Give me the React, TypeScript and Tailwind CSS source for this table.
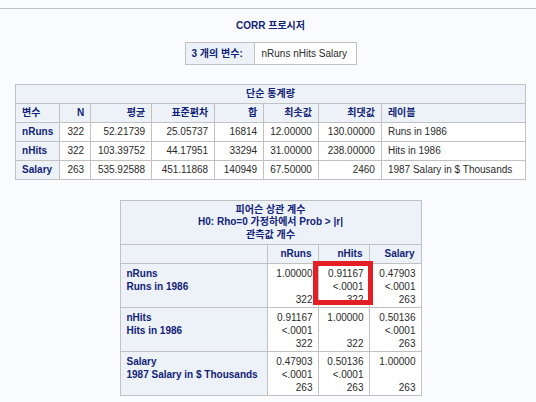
const hd = 'border border-[#c1c1c1] bg-[#edf2f9] font-bold text-[#112277]'
const dt = 'border border-[#c1c1c1] bg-white text-[#2a2a2a]'

const stats = [
  ['nRuns', '322', '52.21739', '25.05737', '16814', '12.00000', '130.00000', 'Runs in 1986'],
  ['nHits', '322', '103.39752', '44.17951', '33294', '31.00000', '238.00000', 'Hits in 1986'],
  ['Salary', '263', '535.92588', '451.11868', '140949', '67.50000', '2460', '1987 Salary in $ Thousands'],
]

const corr = [
  { name: 'nRuns', label: 'Runs in 1986', cells: [['1.00000', '', '322'], ['0.91167', '<.0001', '322'], ['0.47903', '<.0001', '263']] },
  { name: 'nHits', label: 'Hits in 1986', cells: [['0.91167', '<.0001', '322'], ['1.00000', '', '322'], ['0.50136', '<.0001', '263']] },
  { name: 'Salary', label: '1987 Salary in $ Thousands', cells: [['0.47903', '<.0001', '263'], ['0.50136', '<.0001', '263'], ['1.00000', '', '263']] },
]

const App = () => {
  return (
    <div className="min-h-[402px] w-full overflow-hidden bg-[#fafbfe] pt-2 font-['Liberation_Sans','Noto_Sans_CJK_KR',sans-serif] text-[10px] leading-[12px]">
      <div className="flex flex-col items-center border-t border-[#c1c1c1] pl-[5px]">

        <div className="mt-[10px] h-[13px] leading-[13px] font-bold text-[#112277]">CORR 프로시저</div>

        <table className="mt-[10px] border-collapse">
          <tbody>
            <tr className="h-[22px]">
              <td className={`${hd} w-[69px] px-[6px]`}>3 개의 변수:</td>
              <td className={`${dt} w-[102px] px-[7px]`}>nRuns nHits Salary</td>
            </tr>
          </tbody>
        </table>

        <table className="mt-[19px] table-fixed border-collapse">
          <colgroup>
            <col className="w-[44px]" />
            <col className="w-[31px]" />
            <col className="w-[61px]" />
            <col className="w-[63px]" />
            <col className="w-[49px]" />
            <col className="w-[54px]" />
            <col className="w-[63px]" />
            <col className="w-[144px]" />
          </colgroup>
          <tbody>
            <tr className="h-[19px]">
              <td colSpan={8} className={`${hd} text-center`}>단순 통계량</td>
            </tr>
            <tr className="h-[19px]">
              {['변수', 'N', '평균', '표준편차', '합', '최솟값', '최댓값', '레이블'].map((h, i) => (
                <td key={h} className={`${hd} px-[6px] ${i === 0 || i === 7 ? 'text-left' : 'text-right'}`}>{h}</td>
              ))}
            </tr>
            {stats.map((r) => (
              <tr key={r[0]} className="h-[19px]">
                {r.map((c, i) => (
                  <td
                    key={i}
                    className={`${i === 0 ? hd : dt} px-[6px] whitespace-nowrap ${i === 0 || i === 7 ? 'text-left' : 'text-right'}`}
                  >
                    {c}
                  </td>
                ))}
              </tr>
            ))}
          </tbody>
        </table>

        <div className="relative mt-[20px]">
          <table className="table-fixed border-collapse">
            <colgroup>
              <col className="w-[147px]" />
              <col className="w-[51px]" />
              <col className="w-[51px]" />
              <col className="w-[52px]" />
            </colgroup>
            <tbody>
              <tr className="h-[44px]">
                <td colSpan={4} className={`${hd} text-center leading-[12.5px]`}>
                  <div>피어슨 상관 계수</div>
                  <div>H0: Rho=0 가정하에서 Prob &gt; |r|</div>
                  <div>관측값 개수</div>
                </td>
              </tr>
              <tr className="h-[19px]">
                <td className={hd}></td>
                {['nRuns', 'nHits', 'Salary'].map((h) => (
                  <td key={h} className={`${hd} px-[6px] text-right`}>{h}</td>
                ))}
              </tr>
              {corr.map((r) => (
                <tr key={r.name} className="h-[44px]">
                  <td className={`${hd} px-[6px] pt-[3px] align-top leading-[13px] whitespace-nowrap`}>
                    <div>{r.name}</div>
                    <div>{r.label}</div>
                  </td>
                  {r.cells.map((c, i) => (
                    <td key={i} className={`${dt} px-[5px] pt-[3px] align-top text-right leading-[13px]`}>
                      {c.map((v, j) => (
                        <div key={j} className="h-[13px]">{v}</div>
                      ))}
                    </td>
                  ))}
                </tr>
              ))}
            </tbody>
          </table>
          <div className="absolute left-[193px] top-[61px] h-[44px] w-[60px] border-[5px] border-[#e31e24]" />
        </div>

      </div>
    </div>
  )
}

export default App
